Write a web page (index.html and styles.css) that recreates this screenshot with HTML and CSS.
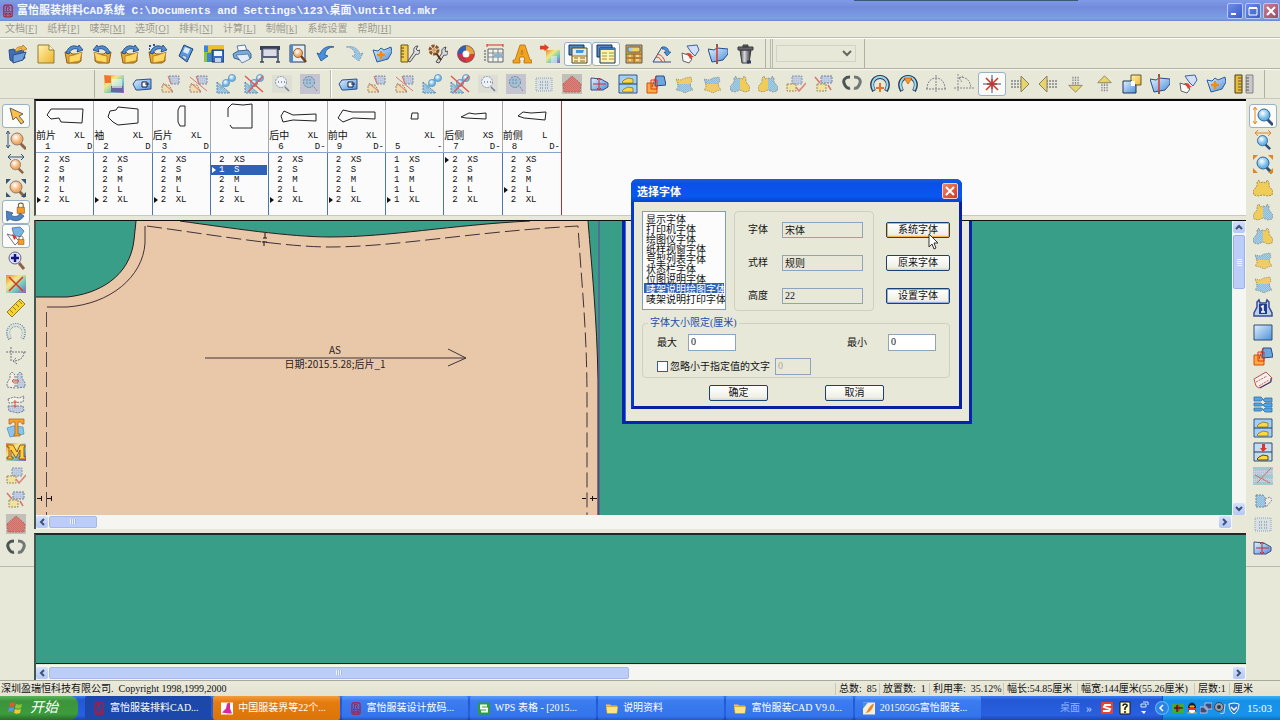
FILE: index.html
```html
<!DOCTYPE html>
<html lang="zh-CN">
<head>
<meta charset="utf-8">
<title>富怡服装排料CAD系统</title>
<link rel="stylesheet" href="styles.css">
</head>
<body>
<svg class="defs" aria-hidden="true">
  <defs>
    <linearGradient id="gb" x1="0" y1="0" x2="1" y2="1"><stop offset="0" stop-color="#e4f1fd"/><stop offset="1" stop-color="#4a90d8"/></linearGradient>
    <linearGradient id="gy" x1="0" y1="0" x2="1" y2="1"><stop offset="0" stop-color="#fff3b0"/><stop offset="1" stop-color="#eeb42c"/></linearGradient>
    <linearGradient id="gs" x1="0" y1="0" x2="1" y2="0"><stop offset="0" stop-color="#3c3c40"/><stop offset=".4" stop-color="#d8d8dc"/><stop offset="1" stop-color="#2c2c30"/></linearGradient>
    <linearGradient id="gr" x1="0" y1="0" x2="1" y2="1"><stop offset="0" stop-color="#f0803c"/><stop offset=".35" stop-color="#f4e884"/><stop offset=".65" stop-color="#70c8c0"/><stop offset="1" stop-color="#8a60c0"/></linearGradient>
    <radialGradient id="lo" cx=".4" cy=".35"><stop offset="0" stop-color="#fff"/><stop offset="1" stop-color="#f0a860"/></radialGradient>
    <radialGradient id="lb" cx=".4" cy=".35"><stop offset="0" stop-color="#fff"/><stop offset="1" stop-color="#64b4e8"/></radialGradient>
    <pattern id="hr" width="2" height="2" patternUnits="userSpaceOnUse"><path fill="#e08078" d="M0 0h2v2H0z"/><path fill="#cc706a" d="M0 0h1v1H0zM1 1h1v1H1z"/></pattern>
    <pattern id="hb" width="2" height="2" patternUnits="userSpaceOnUse"><path fill="#a4cde6" d="M0 0h2v2H0z"/><path fill="#90bcdc" d="M0 0h1v1H0zM1 1h1v1H1z"/></pattern>
    <pattern id="hl" width="2" height="2" patternUnits="userSpaceOnUse"><path fill="#c2cee2" d="M0 0h2v2H0z"/><path fill="#b0bed6" d="M0 0h1v1H0z"/></pattern>
  </defs>
  <symbol id="import" viewBox="0 0 20 20"><path d="M1 6l5-1 1 3 8-2 2 8-12 4-3-2z" fill="#3f6fb4" stroke="#2c4c84"/><path d="M5 11l13-3-3 8-10 3z" fill="#6fa0dc" stroke="#2c4c84"/><path d="M7 6c2-3 5-4 7-3l1-2 4 4-5 2v-2c-2-1-3 0-5 3z" fill="#f4b83c" stroke="#a06818" stroke-width=".7"/></symbol>
  <symbol id="new" viewBox="0 0 20 20"><path d="M2 1h11l5 5v13H2z" fill="url(#gy)" stroke="#8c7c34"/><path d="M13 1v5h5" fill="#fff8d0" stroke="#8c7c34"/></symbol>
  <symbol id="folder" viewBox="0 0 20 20"><path d="M1 8h5l2 2h9v7l-3 2H3z" fill="#e8ac34" stroke="#8c5c14"/><path d="M5 12l5-1 8-3-2 9-11 2z" fill="#ffd860" stroke="#a86c1c" stroke-width=".7"/></symbol>
  <symbol id="open" viewBox="0 0 20 20"><use href="#folder"/><path d="M2 9C4 3 9 0 14 3l1-2 4 5-6 2 1-3C9 4 6 6 5 10z" fill="#4f8fd4" stroke="#1c3c78" stroke-width=".8"/></symbol>
  <symbol id="openback" viewBox="0 0 20 20"><g transform="matrix(-1 0 0 1 20 0)"><use href="#open"/></g></symbol>
  <symbol id="openmany" viewBox="0 0 20 20"><use href="#open"/><path d="M1 2h2M5 1h2M1 5h1" stroke="#2454a0" stroke-width="2"/></symbol>
  <symbol id="disk" viewBox="0 0 20 20"><path d="M8 1l9 4-6 13-8-6z" fill="#5c98dc" stroke="#1c4484"/><path d="M9 3l5 2-2 5-5-2z" fill="#dcecfc"/><path d="M7 11l4 2-1 3-4-3z" fill="#d0dcec" stroke="#1c4484" stroke-width=".5"/></symbol>
  <symbol id="saveas" viewBox="0 0 20 20"><path d="M0 1h20v17H0z" fill="#8cc43c"/><path d="M4 1h16v7H4z" fill="#f4bc2c"/><path d="M0 2h4v6H0zM3 9h4v9H3z" fill="#3c84e0"/><path d="M8 6h12v12H8z" fill="#3c6cc0" stroke="#143468"/><path d="M10 7h8v5h-8z" fill="#eef6fc"/><path d="M11 14h6v4h-6z" fill="#c4d4e4"/></symbol>
  <symbol id="printer" viewBox="0 0 20 20"><path d="M5 2l8-1 2 6-8 2z" fill="#f4f8fc" stroke="#5c7ca4"/><path d="M1 10l5-3 10-1 3 4v4l-8 3-9-3z" fill="#7cacdc" stroke="#3c6090"/><path d="M4 11l12-1 2 5-8 4z" fill="#e4eef8" stroke="#3c6090" stroke-width=".7"/></symbol>
  <symbol id="plotter" viewBox="0 0 20 20"><path d="M0 2h20v4H0z" fill="#34405c"/><path d="M3 5h14v8H3z" fill="#dcdce4" stroke="#6c7488"/><path d="M2 5v13M18 5v13M0 18h4m12 0h4M3 13h14" stroke="#3c4864" stroke-width="1.500" fill="none"/></symbol>
  <symbol id="preview" viewBox="0 0 20 20"><path d="M2 1h15v17H2z" fill="#e4eef8" stroke="#24385c"/><path d="M2 1h3v17H2z" fill="#5488c0"/><circle cx="10" cy="9" r="4.500" fill="url(#lo)" stroke="#9c6434"/><path d="M13 12l5 6" stroke="#744018" stroke-width="2.500"/></symbol>
  <symbol id="undo" viewBox="0 0 20 20"><path d="M1 9l3 1c2-6 8-9 14-7-5 0-9 3-9 8l3 1-7 5z" fill="#4890dc" stroke="#204c90" stroke-width=".8"/></symbol>
  <symbol id="redo" viewBox="0 0 20 20"><g transform="matrix(-1 0 0 1 20 0)"><path d="M1 9l3 1c2-6 8-9 14-7-5 0-9 3-9 8l3 1-7 5z" fill="url(#hb)" stroke="#7496b0" stroke-width=".8" stroke-dasharray="2 1"/></g></symbol>
  <symbol id="pieceplus" viewBox="0 0 20 20"><path d="M1 6l5 1 3-3 3 2 7-3 1 5-4 7-11 3z" fill="url(#gb)" stroke="#2c5c9c"/><path d="M9 7v8M5 11h8" stroke="#f08c14" stroke-width="2.500"/></symbol>
  <symbol id="rulerwrench" viewBox="0 0 20 20"><path d="M1 1h7v17H1z" fill="#f0cc50" stroke="#6c5410"/><path d="M1 4h3M1 7h3M1 10h3M1 13h3" stroke="#5c440c"/><path d="M8 17l6-9c-1-4 1-6 4-6l-2 3 2 2 2-1c0 4-2 5-4 4l-6 8z" fill="#e0e0e4" stroke="#4c4c54"/></symbol>
  <symbol id="gearwrench" viewBox="0 0 20 20"><path d="M8 18l6-9c-1-4 1-5 4-6l-1 3 1 2 2-1c0 4-2 5-4 4l-5 8z" fill="#d8d8dc" stroke="#4c4c54"/><circle cx="6" cy="6" r="4" fill="none" stroke="#8c5428" stroke-width="3" stroke-dasharray="3 1"/><circle cx="6" cy="6" r="2" fill="#d8a060"/><path d="M8 9l5 7" stroke="#583414" stroke-width="2"/></symbol>
  <symbol id="wheel" viewBox="0 0 20 20"><g fill="none" stroke-width="5"><path d="M10 4a6 6 0 0 1 6 6" stroke="#e8a43c"/><path d="M16 10a6 6 0 0 1-6 6" stroke="#e03c30"/><path d="M10 16a6 6 0 0 1-6-6" stroke="#c43448"/><path d="M4 10a6 6 0 0 1 6-6" stroke="#3460b4"/></g><circle cx="10" cy="10" r="8.500" fill="none" stroke="#443454" stroke-width=".6"/><circle cx="10" cy="10" r="3" fill="#fff"/></symbol>
  <symbol id="chart" viewBox="0 0 20 20"><path d="M3 1h16M3 0v3M19 0v3" stroke="#d03020"/><path d="M4 5h15v13H4z" fill="#f4f4e8" stroke="#5c646c"/><path d="M9 5v13M14 5v13M4 9h15M4 13h15" stroke="#7c848c"/><path d="M10 10h8v3h-8z" fill="#84b4d8"/><path d="M1 6v11" stroke="#444c54" stroke-dasharray="2 1"/></symbol>
  <symbol id="glyphA" viewBox="0 0 20 20"><path d="M8 1h5l5 15h2v3h-8v-3h1l-1-3H8l-1 3h1v3H1v-3h2zM10 6l-1 4h2z" fill="#f4a41c" stroke="#a8640c" stroke-width=".7" fill-rule="evenodd"/></symbol>
  <symbol id="palin" viewBox="0 0 20 20"><path d="M6 6h14v13H6z" fill="url(#gr)"/><path d="M11 12h6v7h-6z" fill="#e8f0f8" opacity=".6"/><path d="M0 2h5V0l5 4-5 4V6H0z" fill="#e43c24" transform="scale(.9)"/></symbol>
  <symbol id="win1" viewBox="0 0 20 20"><path d="M1 1h15v10H1z" fill="#4c88c8" stroke="#14305c"/><path d="M4 4h15v15H4z" fill="#fff0b8" stroke="#4c4428"/><path d="M5 5h13v6H5z" fill="#d8ecfc"/><path d="M8 9V6h8l-1 3z" fill="#4c94d4"/><path d="M4 12h15M6 14h4M12 14h5M6 17h4M12 17h5" stroke="#8c6420"/></symbol>
  <symbol id="win2" viewBox="0 0 20 20"><path d="M1 1h15v12H1z" fill="#4c88c8" stroke="#14305c"/><path d="M4 4h15v15H4z" fill="#fff4b8" stroke="#14305c"/><path d="M4 5h15" stroke="#3c74b8" stroke-width="2"/><path d="M6 9h5M13 9h5M6 12h5M13 12h5M6 15h5M13 15h5" stroke="#b48c2c"/></symbol>
  <symbol id="cabinet" viewBox="0 0 20 20"><path d="M2 1h16v18H2z" fill="#dca444" stroke="#5c5c64"/><path d="M4 3h12v5H4z" fill="#a4d0f0" stroke="#2c4c74" stroke-width=".7"/><path d="M7 7l2-3h6v3z" fill="#f4d45c"/><path d="M2 10h16M2 14h16M10 10v9" stroke="#8c6424"/><path d="M5 12h2M12 12h3M5 16h2M12 16h3" stroke="#fff"/></symbol>
  <symbol id="angle" viewBox="0 0 20 20"><path d="M19 18H1L10 3" fill="none" stroke="#2c4c84"/><path d="M5 10c5 1 7 4 8 8M4 13c3 0 5 2 6 5" stroke="#dc4434" fill="none"/><path d="M10 3c4-1 7 2 7 5h2l-4 4-3-4h2c0-2-2-3-4-3z" fill="#4890d4" stroke="#1c4480" stroke-width=".6"/></symbol>
  <symbol id="flip" viewBox="0 0 20 20"><path d="M7 2l10-1 2 5-4 6-4-4z" fill="#d0e0f8" stroke="#44609c"/><path d="M2 9l6 2 4 4-3 4-6-2z" fill="#f8f8f4" stroke="#64646c"/><path d="M6 9c4 0 5 0 6 3h2l-4 3-2-4" fill="#dc4434"/></symbol>
  <symbol id="axis" viewBox="0 0 20 20"><path d="M0 5l6 1 3-2 11 1v5l-5 6-11 2z" fill="url(#gb)" stroke="#244c90"/><path d="M9 1v18" stroke="#e03424" stroke-width="1.500"/><path d="M9 0v3M9 17v3" stroke="#84643c" stroke-width="2"/></symbol>
  <symbol id="trash" viewBox="0 0 20 20"><path d="M4 6h11l-2 13H6z" fill="url(#gs)" stroke="#3c3c40"/><path d="M2 3h15v3H2zM7 1h5v2H7z" fill="#64646c" stroke="#3c3c40"/><path d="M11 18h4" stroke="#2c3c60" stroke-width="3"/></symbol>
  <symbol id="tiles" viewBox="0 0 20 20"><path d="M0 1h20v18H0z" fill="url(#gr)"/><path d="M1 2h6v7H1z" fill="#f0742c"/><path d="M7 12h12v6H7z" fill="#6c649c"/><path d="M8 5h10v9H8z" fill="#f4fcf4" opacity=".6"/></symbol>
  <symbol id="tag" viewBox="0 0 20 20"><path d="M1 10l3-4 15-1v10l-12 1H4z" fill="url(#gb)" stroke="#2c4c8c"/><path d="M10 8h5v5h-5z" fill="#fff" stroke="#141c40"/><path d="M13 10h4" stroke="#141c40"/></symbol>
  <symbol id="clip1" viewBox="0 0 20 20"><path d="M9 2h10v8h-8z" fill="url(#hl)" stroke="#84849c" stroke-dasharray="2 1"/><path d="M2 11h7l4 7H2z" fill="#f0dcac" stroke="#9c8474" stroke-dasharray="2 1"/><path d="M8 2l3 8M3 9l10 9" stroke="#d87468"/></symbol>
  <symbol id="clip2" viewBox="0 0 20 20"><use href="#clip1"/><path d="M2 3l17 14" stroke="#d8786c"/></symbol>
  <symbol id="tri" viewBox="0 0 20 20"><path d="M1 8l13 11H1z" fill="url(#hb)" stroke="#5c88a8" stroke-dasharray="2 1"/><path d="M9 9l6-5M5 14l4-4" stroke="#84b0cc" stroke-width="3"/><circle cx="16" cy="4" r="3.500" fill="url(#lb)" stroke="#6c9cc0"/><circle cx="10" cy="9" r="3.500" fill="url(#lb)" stroke="#6c9cc0"/></symbol>
  <symbol id="trix" viewBox="0 0 20 20"><use href="#tri"/><path d="M1 2l18 16M19 2L4 18" stroke="#dc5c54" stroke-width="1.500"/></symbol>
  <symbol id="mag1" viewBox="0 0 20 20"><path d="M0 1h20v18H0z" fill="#deded4"/><circle cx="9" cy="8" r="5.500" fill="#eef2f6" stroke="#8494ac" stroke-dasharray="2 1"/><path d="M6 8h1m2 0h1m2 0h1M13 13l4 4" stroke="#708098" stroke-width="1.500"/></symbol>
  <symbol id="mag2" viewBox="0 0 20 20"><path d="M0 0h20v20H0z" fill="#c4c4d0"/><circle cx="9" cy="8" r="5.500" fill="#a4c0d4" stroke="#6484a0" stroke-dasharray="2 1"/><path d="M6 6h6M6 9h6M14 13l3 4" stroke="#6c8ca8" stroke-dasharray="2 1"/></symbol>
  <symbol id="dots" viewBox="0 0 20 20"><path d="M2 4h16v13H2z" fill="#d8e0e4" stroke="#8ca4b4" stroke-dasharray="1 1"/><path d="M6 8h3m2 0h3M6 11h3m2 0h3M6 14h3m2 0h3" stroke="#6c8090" stroke-dasharray="1 1"/></symbol>
  <symbol id="house" viewBox="0 0 20 20"><path d="M0 0h20v20H0z" fill="#c0c0b8"/><path d="M1 10l9-8 9 8-1 8H2z" fill="url(#hr)" stroke="#b46460" stroke-dasharray="2 1"/></symbol>
  <symbol id="cross" viewBox="0 0 20 20"><path d="M1 4l10 1 7 4v4l-5 3H1z" fill="url(#gb)" stroke="#3c4c88"/><path d="M9 4v12M3 10h13M7 6l2-2 2 2M7 14l2 2 2-2" stroke="#cc2c34" fill="none"/></symbol>
  <symbol id="yshelf" viewBox="0 0 20 20"><path d="M1 1h18v18H1z" fill="#a4d0f4" stroke="#2c5888"/><path d="M4 8l2-2 4-2 5 1v4H5zM4 17l2-2 4-2 5 1v4H5z" fill="#fcd844" stroke="#7c6420" stroke-width=".7"/><path d="M1 10h18" stroke="#1c3c68"/></symbol>
  <symbol id="redblue" viewBox="0 0 20 20"><path d="M1 9h10v10H1z" fill="#fcac3c" stroke="#d04c14"/><path d="M10 2h8l2 9-11 1z" fill="#6ca8e0" stroke="#2c4c84"/><path d="M5 6h6v9H5zM10 2L6 13" stroke="#dc3420" fill="none"/></symbol>
  <symbol id="cowA" viewBox="0 0 20 20"><path d="M2 5l5 1 4-2 6-1 1 4-2 3H3z" fill="#f0cc68"/><path d="M3 10h14v3l2 3-4 1-4 2-4-2-5-1 2-3z" fill="url(#hb)"/><path d="M2 5l5 1 4-2 6-1 1 4-2 3 1 3 2 3-4 1-4 2-4-2-5-1 2-3V9z" fill="none" stroke="#80755a" stroke-width=".7" stroke-dasharray="1 1"/></symbol>
  <symbol id="cowB" viewBox="0 0 20 20"><path d="M2 5l5 1 4-2 6-1 1 4-2 3H3z" fill="url(#hb)"/><path d="M3 10h14v3l2 3-4 1-4 2-4-2-5-1 2-3z" fill="#f0cc68"/><path d="M2 5l5 1 4-2 6-1 1 4-2 3 1 3 2 3-4 1-4 2-4-2-5-1 2-3V9z" fill="none" stroke="#80755a" stroke-width=".7" stroke-dasharray="1 1"/></symbol>
  <symbol id="cowC" viewBox="0 0 20 20"><path d="M10 4L7 5 6 2 4 4v4l-4 5 1 4 4 1 5-2z" fill="url(#hb)"/><path d="M10 4l3 1 1-3 2 2v4l4 5-1 4-4 1-5-2z" fill="#f0cc58"/><path d="M10 4L7 5 6 2 4 4v4l-4 5 1 4 4 1 5-2 5 2 4-1 1-4-4-5V4l-2-2-1 3z" fill="none" stroke="#84806c" stroke-width=".7" stroke-dasharray="2 1"/></symbol>
  <symbol id="cowD" viewBox="0 0 20 20"><g transform="matrix(-1 0 0 1 20 0)"><use href="#cowC"/></g></symbol>
  <symbol id="cowY" viewBox="0 0 20 20"><path d="M10 4L7 5 6 2 4 4v4l-4 5 1 4 4 1 5-1 5 1 4-1 1-4-4-5V4l-2-2-1 3z" fill="#f0cc58" stroke="#a07c34" stroke-width=".8" stroke-dasharray="2 1"/></symbol>
  <symbol id="ycheck" viewBox="0 0 20 20"><path d="M6 2h10v8H6z" fill="url(#hl)" stroke="#8894b0" stroke-dasharray="2 1"/><path d="M1 10h9v7H1z" fill="#f0e2a0" stroke="#98885c" stroke-dasharray="2 1"/><path d="M10 13l3 4 7-8" fill="none" stroke="#dc8478" stroke-width="1.500"/></symbol>
  <symbol id="yx" viewBox="0 0 20 20"><path d="M7 2h11v7H7z" fill="url(#hl)" stroke="#7080a4" stroke-dasharray="2 1"/><path d="M3 10h9v7H3z" fill="#f0e2a0" stroke="#98885c" stroke-dasharray="2 1"/><path d="M1 3l5 6M14 11l3 5" stroke="#dc7468" stroke-width="1.500"/></symbol>
  <symbol id="ring" viewBox="0 0 20 20"><path d="M8 3C3 3 1 6 2 9s3 6 6 5" fill="none" stroke="#4c5454" stroke-width="3"/><path d="M12 3c5 0 7 3 6 6s-3 6-6 5" fill="none" stroke="#707878" stroke-width="3"/></symbol>
  <symbol id="arc1" viewBox="0 0 20 20"><path d="M4 17C-1 8 5 3 10 3s11 5 6 14" fill="none" stroke="#2c3c54" stroke-width="4"/><path d="M4 16C0 8 5 3 10 3s10 5 6 13" fill="none" stroke="#9cdcf0" stroke-width="2"/><path d="M10 9v9M6 14h8" stroke="#e87428" stroke-width="2"/></symbol>
  <symbol id="arc2" viewBox="0 0 20 20"><path d="M4 17C-1 8 5 3 10 3s11 5 6 14" fill="none" stroke="#2c3c54" stroke-width="4"/><path d="M4 16C0 8 5 3 10 3s10 5 6 13" fill="none" stroke="#9cdcf0" stroke-width="2"/><path d="M6 4h8l-4 6z" fill="#f49c24" stroke="#a84c14" stroke-width=".6"/></symbol>
  <symbol id="arcd1" viewBox="0 0 20 20"><path d="M1 15C1 8 5 4 10 4s9 4 9 11M10 1v18M0 15h20" fill="none" stroke="#80808c" stroke-dasharray="2 1"/></symbol>
  <symbol id="arcd2" viewBox="0 0 20 20"><path d="M4 0v18M0 14h20M5 4c7-2 11 2 12 10M5 4l4-2M5 4l3 4" fill="none" stroke="#888894" stroke-dasharray="2 1"/></symbol>
  <symbol id="arcd3" viewBox="0 0 20 20"><path d="M5 1v15M0 6h20M18 6c0 6-5 9-11 9l3-3M7 15l4 3" fill="none" stroke="#707084" stroke-dasharray="2 1"/></symbol>
  <symbol id="arcdash" viewBox="0 0 20 20"><path d="M4 17C-1 8 5 3 10 3s11 5 6 14" fill="none" stroke="#708490" stroke-width="4" stroke-dasharray="1 1"/><path d="M4 16C0 8 5 3 10 3s10 5 6 13" fill="none" stroke="#d4e4e4" stroke-width="2"/></symbol>
  <symbol id="star" viewBox="0 0 20 20"><path d="M10 1v18M1 10h18" stroke="#3c4c70"/><path d="M4 4l12 12M16 4L4 16" stroke="#d83024" stroke-width="1.500"/><path d="M10 5v10M5 10h10" stroke="#a43c40" stroke-width="1.500"/></symbol>
  <symbol id="aR" viewBox="0 0 20 20"><path d="M1 7h10M1 13h10M1 10h10" stroke="#80848c" stroke-width="1.500" stroke-dasharray="2 1"/><path d="M11 2l8 8-8 8z" fill="#e8d46c" stroke="#848060"/></symbol>
  <symbol id="aL" viewBox="0 0 20 20"><g transform="rotate(180 10 10)"><use href="#aR"/></g></symbol>
  <symbol id="aD" viewBox="0 0 20 20"><g transform="rotate(90 10 10) translate(2 2) scale(.85)"><use href="#aR"/></g></symbol>
  <symbol id="aU" viewBox="0 0 20 20"><g transform="rotate(270 10 10) translate(2 2) scale(.85)"><use href="#aR"/></g></symbol>
  <symbol id="blend" viewBox="0 0 20 20"><path d="M9 1h10v10H9z" fill="url(#gy)" stroke="#605830"/><path d="M1 7h9v4h4v8H1z" fill="url(#gb)" stroke="#1c345c"/><path d="M9 7h4v5H9z" fill="#fff"/></symbol>
  <symbol id="rulers" viewBox="0 0 20 20"><path d="M1 1h7v18H1z" fill="#e8bc3c" stroke="#4c3c10"/><path d="M12 1h7v18h-7z" fill="#c8c8cc" stroke="#84848c"/><path d="M4 4h4M4 7h4M4 10h4M4 13h4M4 16h4M12 4h3M12 7h3M12 10h3M12 13h3M12 16h3" stroke="#645834"/></symbol>
  <symbol id="cursor" viewBox="0 0 20 20"><path d="M4 2l3 12 3-3 5 7 3-2-5-6 4-2z" fill="#fcc048" stroke="#64605c"/></symbol>
  <symbol id="lensO" viewBox="0 0 20 20"><path d="M13 13l6 6" stroke="#8c6444" stroke-width="3"/><circle cx="10" cy="9" r="6" fill="url(#lo)" stroke="#947868"/></symbol>
  <symbol id="lensB" viewBox="0 0 20 20"><path d="M13 13l6 6" stroke="#30507c" stroke-width="3"/><circle cx="10" cy="9" r="6" fill="url(#lb)" stroke="#346494"/></symbol>
  <symbol id="vO" viewBox="0 0 20 20"><use href="#lensO" transform="translate(1 0)"/><path d="M2 2v15M0 4l2-3 2 3M0 15l2 3 2-3" fill="none" stroke="#34507c"/></symbol>
  <symbol id="hO" viewBox="0 0 20 20"><use href="#lensO" transform="translate(1 3) scale(.85)"/><path d="M2 3h15M5 0L2 3l3 3M15 0l3 3-3 3" fill="none" stroke="#34507c"/></symbol>
  <symbol id="aO" viewBox="0 0 20 20"><use href="#lensO"/><path d="M0 1h5L0 6zM20 1h-5l5 5zM0 19h5l-5-5zM20 19h-5l5-5z" fill="#34547c"/></symbol>
  <symbol id="vB" viewBox="0 0 20 20"><use href="#lensB" transform="translate(1 0)"/><path d="M2 2v15M0 4l2-3 2 3M0 15l2 3 2-3" fill="none" stroke="#e48424"/></symbol>
  <symbol id="hB" viewBox="0 0 20 20"><use href="#lensB" transform="translate(1 3) scale(.85)"/><path d="M2 3h15M5 0L2 3l3 3M15 0l3 3-3 3" fill="none" stroke="#e48424"/></symbol>
  <symbol id="aB" viewBox="0 0 20 20"><use href="#lensB"/><path d="M0 1h5L0 6zM20 1h-5l5 5zM0 19h5l-5-5zM20 19h-5l5-5z" fill="#e48424"/></symbol>
  <symbol id="lock" viewBox="0 0 20 20"><path d="M4 9V4c0-4 8-4 8 0v5" fill="none" stroke="#74643c" stroke-width="1.800"/><path d="M2 8h12v10H2z" fill="#f09c2c" stroke="#8c4c10"/></symbol>
  <symbol id="lockarrow" viewBox="0 0 20 20"><path d="M0 9l7 2-2 2c4 3 8 1 9-2l4 3c-3 5-9 6-14 3l-3 2z" fill="#4c84c4" stroke="#2c4c84" stroke-width=".7"/><use href="#lock" x="10" y="0" width="12" height="13"/></symbol>
  <symbol id="lockpiece" viewBox="0 0 20 20"><path d="M6 2l8-1 4 4-4 6-6-2z" fill="#78b4e4" stroke="#6480b4"/><path d="M1 8l7 2 5 5-4 4z" fill="#fff" stroke="#74748c"/><path d="M6 8l5 3-3 3z" fill="#dc3428"/><use href="#lock" x="11" y="9" width="10" height="11"/></symbol>
  <symbol id="zoomplus" viewBox="0 0 20 20"><path d="M13 13l5 6" stroke="#8c6444" stroke-width="3"/><circle cx="9" cy="8" r="6" fill="#dce0fc" stroke="#64648c"/><path d="M9 4v8M5 8h8" stroke="#141480" stroke-width="2.500"/></symbol>
  <symbol id="palx" viewBox="0 0 20 20"><path d="M0 1h20v18H0z" fill="url(#gr)"/><path d="M3 3l14 14M17 3L3 17" stroke="#dc3424" stroke-width="1.500"/></symbol>
  <symbol id="yruler" viewBox="0 0 20 20"><path d="M1 14L14 1l5 5L6 19z" fill="#f8d42c" stroke="#8c7c2c"/><path d="M4 12l3 3M7 9l3 3M10 6l3 3M13 3l3 3" stroke="#8c7c2c"/></symbol>
  <symbol id="pair" viewBox="0 0 20 20"><path d="M9 5L6 2 4 4v4l-3 5v4l8 1z" fill="#f0eee0" stroke="#78788c" stroke-dasharray="2 1"/><path d="M11 5l3-3 2 2v4l3 5v4l-8 1z" fill="url(#hl)" stroke="#708094" stroke-dasharray="2 1"/><path d="M6 11h7M8 9l-2 2 2 2M11 9l2 2-2 2" stroke="#dc5c4c" fill="none"/></symbol>
  <symbol id="stack" viewBox="0 0 20 20"><path d="M2 5l6-2 5 1 5-2-1 6-14 1z" fill="#f4f2e4" stroke="#78788c" stroke-dasharray="2 1"/><path d="M2 12h15l1 5-6 2-9-2z" fill="url(#hl)" stroke="#7080a0" stroke-dasharray="2 1"/><path d="M9 6v8M7 8h4M7 12h4" stroke="#dc5c4c"/></symbol>
  <symbol id="glyphT" viewBox="0 0 20 20"><path d="M1 10l6-2 10 1 1 7-14 3z" fill="#88c4ec" stroke="#5494c4" stroke-width=".8"/><path d="M3 1h15v5h-2c0-2-2-2-4-2v12h2v2H8v-2h1V4C6 4 5 4 5 6H3z" fill="#f8a428" stroke="#a05c20" stroke-width=".7"/></symbol>
  <symbol id="glyphM" viewBox="0 0 20 20"><path d="M0 1h20v18H0z" fill="url(#gr)"/><path d="M1 3h6l4 7 3-7h5v2h-1v10h2v2h-7v-2h1V8l-4 8-5-8v7h2v2H1v-2h2V5H1z" fill="#ffd040" stroke="#90340c" stroke-width=".8"/></symbol>
  <symbol id="shirt" viewBox="0 0 20 20"><path d="M7 5L6 2 4 4v5l-3 6v3h18v-3l-3-6V4l-2-2-1 3z" fill="#bcd0ec" stroke="#384c94" stroke-width="1.500"/><path d="M6 6h8v10H6z" fill="#203c8c"/><path d="M8 9l2-1v6m-2 0h4" stroke="#fff" stroke-width="1.500" fill="none"/></symbol>
  <symbol id="bluebox" viewBox="0 0 20 20"><path d="M1 3h18v15H1z" fill="url(#gb)" stroke="#2c4c74"/></symbol>
  <symbol id="wallet" viewBox="0 0 20 20"><path d="M1 9L13 2l6 6-2 4-11 6-3-2z" fill="#f8f0e8" stroke="#b45458"/><path d="M3 12l11-6M6 16l10-6" stroke="#b46468" stroke-dasharray="2 1"/><path d="M7 18l11-6v-4" fill="none" stroke="#30307c"/></symbol>
  <symbol id="brows" viewBox="0 0 20 20"><path d="M1 3h7l2 2-2 2H1zM12 4h7v4h-7l-2-2zM1 9h7l2 2-2 1H1zM12 9h7v4h-7l-2-2zM1 14h7l2 1-2 2H1zM12 14h7v4h-7l-2-2z" fill="#54a4e0" stroke="#3470a4" stroke-width=".8"/></symbol>
  <symbol id="fdown" viewBox="0 0 20 20"><path d="M1 1h18v18H1z" fill="#c4dcf0" stroke="#2c4c78"/><path d="M1 10h18" stroke="#1c3c68"/><path d="M4 17l2-2 4-2 5 1v4H5z" fill="#fcd844" stroke="#5c4810"/><path d="M9 2h3v4h2l-4 4-3-4h2z" fill="#e43424"/></symbol>
  <symbol id="chk" viewBox="0 0 20 20"><path d="M0 1h20v18H0z" fill="#9ccccc"/><path d="M0 4h20v5H0zM0 12h20v4H0z" fill="url(#hl)"/><path d="M2 9l15 8M4 17L18 2" stroke="#d86c64"/></symbol>
  <symbol id="ghost" viewBox="0 0 20 20"><path d="M3 5h7l3 4-1 8H3z" fill="url(#hb)" stroke="#708494" stroke-dasharray="2 1"/><path d="M12 9l5-2 2 3-6 7z" fill="#ecebe0" stroke="#8c84a0" stroke-dasharray="2 1"/></symbol>
  <symbol id="app" viewBox="0 0 12 16"><rect x="1" y="1" width="10" height="14" rx="2" fill="none" stroke="#b01c3c" stroke-width="1.500"/><path d="M4 8V3h3l1 2-2 1 2 2M2 9h8M3 11h2v2H3zM7 11h2v2H7z" fill="none" stroke="#b01c3c" stroke-width="1.200"/></symbol>
  <symbol id="tfolder" viewBox="0 0 12 12"><path d="M0 2h4l1 1h6v3H0z" fill="#f4c848"/><path d="M0 4h12l-1 7H1z" fill="#ffe480" stroke="#c88c20" stroke-width=".6"/></symbol>
</svg>

<header class="titlebar">
  <svg class="appicon"><use href="#app"/></svg>
  <h1>富怡服装排料CAD系统 C:\Documents and Settings\123\桌面\Untitled.mkr</h1>
  <div class="edge"></div>
  <button class="wbtn" aria-label="最小化"><svg viewBox="0 0 14 14"><path d="M3 10h5" stroke="#fff" stroke-width="2"/></svg></button>
  <button class="wbtn" aria-label="最大化"><svg viewBox="0 0 14 14"><path d="M3 4h8v7H3z" fill="none" stroke="#fff"/><path d="M3 4h8" stroke="#fff" stroke-width="2"/></svg></button>
  <button class="wbtn close" aria-label="关闭"><svg viewBox="0 0 14 14"><path d="M3 3l8 8M11 3l-8 8" stroke="#fff" stroke-width="2"/></svg></button>
</header>

<nav class="menubar">
  <button>文档[<u>F</u>]</button><button>纸样[<u>P</u>]</button><button>唛架[<u>M</u>]</button><button>选项[<u>O</u>]</button><button>排料[<u>N</u>]</button><button>计算[<u>L</u>]</button><button>制帽[<u>k</u>]</button><button>系统设置</button><button>帮助[<u>H</u>]</button>
</nav>

<div class="row1">
  <div class="bar" data-tools="import new open openback open openmany disk saveas printer plotter preview undo redo pieceplus rulerwrench gearwrench wheel chart glyphA palin *win1 *win2 cabinet angle flip axis trash"></div>
  <div class="combo"><select disabled aria-label="方案"></select></div>
</div>
<div class="row2">
  <div class="bar" data-tools="tiles tag clip1 clip2 tri trix mag1 mag2 | tag clip1 clip2 tri trix mag1 mag2 dots house cross yshelf redblue cowA cowB cowC cowD ycheck yx ring arc1 arc2 arcd1 arcd2 *star aR aL aD aU blend axis flip pieceplus rulers"></div>
</div>

<main class="work">
  <aside class="side left"><div class="bar" data-tools="*cursor vO hO aO *lockarrow *lockpiece zoomplus palx yruler arcdash arcd3 pair stack glyphT glyphM ycheck yx house ring"></div></aside>

  <section class="center">
    <div class="pieces"><div class="cards"></div></div>
    <div class="pane top">
      <div class="canvas">
        <svg class="drawing" viewBox="36 221 1196 295" preserveAspectRatio="xMinYMin slice">
          <path d="M36 297H67C98 294 130 277 134 240L136 221H180C230 228 290 237 330 237C390 237 450 225 530 221H588C592 270 597 320 598 380V516H36z" fill="#e8c8a8"/>
          <path d="M36 297H67C98 294 130 277 134 240L136 221M180 221C230 228 290 237 330 237C390 237 450 225 530 221M588 221C592 270 597 320 598 380V516" fill="none" stroke="#2a1c20"/>
          <path d="M599 221V516" stroke="#6c3ca0"/>
          <path d="M47 307H67C110 304 143 277 145 243V226" fill="none" stroke="#403038"/>
          <path d="M147 226C220 236 285 247 330 247C395 247 470 232 578 226C582 290 587 330 587 400V516" fill="none" stroke="#403038" stroke-dasharray="15 5"/>
          <path d="M46.500 312V516" stroke="#504858" stroke-dasharray="15 5"/>
          <path d="M37 498.500h5M47 498.500h5M41.500 496v5M51.500 496v5M582 498.500h4M590 498.500h7M592.500 496v5M265 233v5M263 238h4M264 241v5M262 242h5" stroke="#181014"/>
          <path d="M205 358H466L448 349M466 358L448 366" fill="none" stroke="#403438"/>
          <text x="335" y="354" text-anchor="middle">AS</text>
          <text x="335" y="368" text-anchor="middle">日期:2015.5.28;后片_1</text>
        </svg>
        <div class="backdialog"></div>
      </div>
      <div class="vscroll"><button class="sb" aria-label="向上"><svg viewBox="0 0 12 12"><path d="M3 8l3-3 3 3"/></svg></button><div class="vthumb"></div><button class="sb" aria-label="向下"><svg viewBox="0 0 12 12"><path d="M3 4l3 3 3-3"/></svg></button></div>
      <div class="hscroll"><button class="sb" aria-label="向左"><svg viewBox="0 0 12 12"><path d="M8 3L5 6l3 3"/></svg></button><div class="hthumb short"></div><button class="sb" aria-label="向右"><svg viewBox="0 0 12 12"><path d="M4 3l3 3-3 3"/></svg></button></div>
    </div>
    <div class="pane bottom">
      <div class="canvas"></div>
      <div class="hscroll"><button class="sb" aria-label="向左"><svg viewBox="0 0 12 12"><path d="M8 3L5 6l3 3"/></svg></button><div class="hthumb long"></div><button class="sb" aria-label="向右"><svg viewBox="0 0 12 12"><path d="M4 3l3 3-3 3"/></svg></button></div>
    </div>
  </section>

  <aside class="side right"><div class="bar" data-tools="*vB hB aB cowY cowD cowC cowB cowA shirt bluebox redblue wallet brows yshelf fdown chk ghost dots cross"></div></aside>
</main>

<footer class="status">
  <span class="company">深圳盈瑞恒科技有限公司. &nbsp;Copyright 1998,1999,2000</span>
  <span class="c44">总数: &nbsp;85</span><span class="c50">放置数: &nbsp;1</span><span class="c73">利用率: &nbsp;35.12%</span><span class="c73">幅长:54.85厘米</span><span class="c117">幅宽:144厘米(55.26厘米)</span><span class="c35">层数:1</span><span class="c44">厘米</span>
</footer>

<div class="taskbar">
  <button class="start"><svg viewBox="0 0 16 16"><path d="M2 3c2-1 4-1 5 0L6 7C5 6 3 6 1 7z" fill="#e8542c"/><path d="M8 4c2 1 4 1 6 0l-1 4c-2 1-4 1-6 0z" fill="#8cc43c"/><path d="M1 8c2-1 3-1 5 0l-1 4C3 11 2 11 0 12z" fill="#5c94e8"/><path d="M7 9c2 1 4 1 6 0l-1 4c-2 1-4 1-6 0z" fill="#f8c82c"/></svg>开始</button>
  <div class="tasks">
    <button class="task active"><svg><use href="#app"/></svg>富怡服装排料CAD...</button>
    <button class="task alert"><svg viewBox="0 0 12 12"><path d="M0 0h12v12H0z" fill="#fff"/><path d="M6 1l3-1v6l2 5H7L1 10l4-4z" fill="#d8289c"/></svg>中国服装界等22个...</button>
    <button class="task"><svg><use href="#app"/></svg>富怡服装设计放码...</button>
    <button class="task"><svg viewBox="0 0 12 12"><path d="M0 0h12v12H0z" fill="#2c9c3c"/><path d="M9 3H3v3h6v3H3" fill="none" stroke="#fff" stroke-width="1.800"/></svg>WPS 表格 - [2015...</button>
    <button class="task"><svg><use href="#tfolder"/></svg>说明资料</button>
    <button class="task"><svg><use href="#tfolder"/></svg>富怡服装CAD V9.0...</button>
    <button class="task"><svg viewBox="0 0 12 12"><path d="M0 0h12v12H0z" fill="#f4f0d8"/><path d="M1 11c4 0 4-8 10-10-1 5-3 9-10 10z" fill="#e8842c"/><path d="M0 0h5L0 6z" fill="#4c8cdc"/></svg>20150505富怡服装...</button>
  </div>
  <div class="lang"><span>桌面</span><sup>»</sup>
    <svg viewBox="0 0 14 14"><rect x="1" y="1" width="12" height="12" rx="1" fill="#e8442c"/><path d="M11 4H5L4 6l6 2-1 2H3" fill="none" stroke="#fff" stroke-width="2"/></svg>
    <svg viewBox="0 0 14 14"><path d="M2 1h10v12H2z" fill="#fff8c8" stroke="#141414"/><path d="M5 5c0-3 5-2 4 0L7 7v2M7 10v2" fill="none" stroke="#141414" stroke-width="1.500"/></svg>
    <svg viewBox="0 0 14 14"><path d="M5 3h5v3H5zM7 1h5v3" fill="none" stroke="#dce8fc"/><path d="M5 10h5l-2 3z" fill="#fff"/></svg>
  </div>
  <div class="tray">
    <button class="chev" aria-label="展开"><svg viewBox="0 0 12 12"><path d="M7 3L4 6l3 3" fill="none" stroke="#fff" stroke-width="1.500"/></svg></button>
    <svg viewBox="0 0 12 12"><path d="M0 2h12v9H0z" fill="#3cac3c"/><path d="M2 6l4-4 3 4-3 4z" fill="#dc3424"/><path d="M5 3v7M2 6h9" stroke="#141414"/></svg>
    <svg viewBox="0 0 12 12"><ellipse cx="6" cy="6" rx="4" ry="5.500" fill="#241c1c"/><ellipse cx="6" cy="9" rx="3" ry="2.500" fill="#fff"/><path d="M2 6h8v2H2z" fill="#e03424"/><path d="M4 4h4v1H4zM1 11h4m2 0h4" fill="#f4ac24" stroke="#f4ac24"/></svg>
    <svg viewBox="0 0 12 12"><path d="M5 1h7v6H5zM0 5h7v6H0z" fill="#40487c" stroke="#b4c4dc"/></svg>
    <svg viewBox="0 0 12 12"><circle cx="5" cy="5" r="4.500" fill="#9ca0a8" stroke="#3c4454"/><circle cx="5" cy="5" r="2" fill="#30384c"/><path d="M11 2l-1 9-4 1" fill="none" stroke="#c8d0dc"/></svg>
    <svg viewBox="0 0 12 12"><path d="M1 2l5-1 5 1c0 5-2 8-5 10C3 10 1 7 1 2z" fill="#2c74c4" stroke="#fff"/><path d="M3 5l3 3 3-3" stroke="#fff" fill="none" stroke-width="1.500"/></svg>
    <time>15:03</time>
  </div>
</div>

<form class="dialog" role="dialog" aria-label="选择字体">
  <div class="dtitle"><h2>选择字体</h2><button type="button" class="dclose" aria-label="关闭"><svg viewBox="0 0 14 14"><path d="M3 3l8 8M11 3l-8 8" stroke="#fff" stroke-width="2"/></svg></button></div>
  <div class="dbody">
    <div class="drow">
      <select class="fontlist" size="10" aria-label="字体类别"><option>显示字体</option><option>打印机字体</option><option>绘图仪字体</option><option>纸样视窗字体</option><option>号型列表字体</option><option>状态栏字体</option><option>位图说明字体</option><option selected>唛架说明绘图字体</option><option>唛架说明打印字体</option></select>
      <div class="props">
        <label for="f1">字体</label><input id="f1" value="宋体" readonly>
        <label for="f2">式样</label><input id="f2" value="规则" readonly>
        <label for="f3">高度</label><input id="f3" value="22" readonly>
      </div>
      <div class="acts"><button type="button" class="btn hot">系统字体</button><button type="button" class="btn">原来字体</button><button type="button" class="btn def">设置字体</button></div>
    </div>
    <fieldset class="limits">
      <legend>字体大小限定(厘米)</legend>
      <div class="lrow"><label for="mx">最大</label><input id="mx" value="0"><label class="push" for="mn">最小</label><input id="mn" value="0"></div>
      <div class="lrow two"><input type="checkbox" id="ig"><label for="ig">忽略小于指定值的文字</label><input class="small" value="0" disabled aria-label="指定值"></div>
    </fieldset>
    <div class="dend"><button type="button" class="btn">确定</button><button type="button" class="btn">取消</button></div>
  </div>
</form>
<svg class="pointer" viewBox="0 0 12 18"><path d="M1 1v13l3-3 2 5 2-1-2-5h4z" fill="#fff" stroke="#333"/></svg>
<script src="app.js"></script>
</body>
</html>
```

FILE: styles.css
```css
* { box-sizing: border-box; }
body, h1, h2, fieldset { margin: 0; padding: 0; }
body {
  height: 100vh;
  display: flex;
  flex-direction: column;
  overflow: hidden;
  background: #e8e8d9;
  color: #111;
  font: 10px/12px "Liberation Serif", "Noto Sans CJK SC", serif;
}
button, input, select { font: inherit; color: inherit; padding: 0; margin: 0; border: 0; background: none; border-radius: 0; }
svg { display: block; flex: none; }
.defs { position: absolute; width: 0; height: 0; }

.titlebar {
  flex: none; height: 21px; display: flex; align-items: center; gap: 2px; padding: 0 1px 0 3px;
  background: linear-gradient(#7f9be6, #738bdc 35%, #7c9fe4 90%, #6c86cc);
}
.appicon { width: 10px; height: 14px; margin-right: 2px; }
.titlebar h1 { flex: 1; font: bold 11px/16px "Liberation Mono", "Noto Sans CJK SC", monospace; color: #f4f8ff; white-space: nowrap; }
.edge { align-self: flex-start; width: 224px; height: 1px; margin-right: 147px; background: #3c5a78; }
.wbtn { width: 16px; height: 16px; border: 1px solid #b8c8f4; border-radius: 2px; background: linear-gradient(135deg, #6c8cec, #3c5ccc); }
.wbtn svg { width: 14px; height: 14px; }
.wbtn.close { background: linear-gradient(135deg, #c48094, #9c4c64); }

.menubar { flex: none; height: 17px; display: flex; gap: 10px; align-items: center; padding-left: 5px; border-bottom: 1px solid #bcbcb0; color: #9a9a90; }

.row1, .row2 { flex: none; display: flex; }
.row1 { height: 31px; border-top: 1px solid #fff; border-bottom: 1px solid #b0b0a4; }
.row2 { height: 30px; padding-left: 94px; border-bottom: 1px solid #c8c8bc; border-top: 1px solid #f8f8f0; }
.bar { display: flex; align-items: center; }
.row1 .bar { width: 766px; padding-left: 4px; border-right: 1px solid #b0b0a4; }
.row2 .bar { width: 1171px; padding-left: 5px; border-left: 1px solid #b0b0a4; border-right: 1px solid #b0b0a4; }
.tool { width: 28px; height: 24px; flex: none; display: flex; align-items: center; justify-content: center; border: 1px solid transparent; border-radius: 3px; }
.tool svg { width: 20px; height: 20px; }
.tool.on { background: #fbfbf8; border-color: #98b0c8; }
.sep { width: 10px; height: 28px; margin: 0 -6px 0 6px; border-left: 1px solid #b8b8ac; box-shadow: inset 1px 0 #fff; }
.combo { display: flex; align-items: center; padding: 0 8px 0 3px; margin-left: 4px; border-left: 3px double #b8b8ac; border-right: 1px solid #b0b0a4; }
.combo select { width: 80px; height: 17px; border: 1px solid #c4c4b8; background: #e8e8d9; opacity: .6; }

.work { flex: 1; min-height: 0; display: flex; }
.side { flex: none; width: 34px; }
.side .bar { flex-direction: column; padding: 5px 0 6px; border-bottom: 1px solid #b8b8ac; }
.side.left .bar { padding-right: 2px; }
.center { flex: 1; min-width: 0; display: flex; flex-direction: column; gap: 4px; }

.pieces { flex: none; height: 117px; background: #fbfbfb; border-top: 2px solid #080808; border-left: 2px solid #505050; border-bottom: 1px solid #c8c8bc; }
.cards { width: 526px; height: 100%; display: grid; grid-template-columns: repeat(9, minmax(0, 1fr)); border-right: 1px solid #b03038; font: 9px/10px "Liberation Mono", "Noto Sans CJK SC", monospace; }
.card { display: flex; flex-direction: column; overflow: hidden; }
.thumb { height: 52px; display: flex; flex-direction: column; border-bottom: 1px solid #88a4c8; border-right: 1px solid #a8a8a8; }
.thumb svg { width: 58px; height: 30px; }
.thumb path { fill: none; stroke: #222; }
.thumb div { display: flex; height: 11px; line-height: 11px; white-space: nowrap; }
.thumb .nm { flex: 1; font-size: 10px; }
.thumb .sz { width: 19px; }
.thumb .no { flex: 1; padding-left: 9px; }
.thumb .dd { padding-right: 1px; }
.sizes { flex: 1; padding-top: 2px; border-right: 1px solid #4c78b0; }
.card:last-child > div { border-right: 0; }
.size { display: grid; grid-template-columns: 7px 15px 1fr; height: 10px; line-height: 10px; padding-left: 1px; white-space: nowrap; }
.size i { display: block; width: 0; height: 0; margin-top: 2px; border: 3px solid transparent; border-left: 4px solid #111; border-right: 0; }
.size.sel { background: #2d62b8; color: #fff; margin-right: 1px; }
.size.sel i { border-left-color: #fff; }

.pane { display: grid; min-height: 0; border-left: 2px solid #405850; }
.pane.top { flex: 310; grid-template: minmax(0, 1fr) 14px / minmax(0, 1fr) 14px; border-top: 1px solid #111; }
.pane.bottom { flex: 146; grid-template: minmax(0, 1fr) 15px / minmax(0, 1fr); border-top: 2px solid #182c28; }
.canvas { position: relative; overflow: hidden; background: #389e87; }
.bottom .canvas { border-bottom: 1px solid #10201c; margin-bottom: 1px; }
.drawing { width: 100%; height: 100%; }
.drawing text { font: 10px "Noto Sans CJK SC", sans-serif; fill: #2a2024; }
.backdialog { position: absolute; left: 586px; top: -20px; width: 350px; height: 223px; background: #e8e8d9; border: 3px solid #0a22b0; border-top: 0; box-shadow: inset 1px 0 #3c68e0; }
.hscroll, .vscroll { display: flex; align-items: center; background: #f5f5f2; }
.hscroll { padding-right: 1px; }
.vscroll { flex-direction: column; }
.hscroll .sb:last-child { margin-left: auto; }
.vscroll .sb:last-child { margin-top: auto; }
.sb { flex: none; width: 12px; height: 12px; border-radius: 2px; background: linear-gradient(#d4e0fc, #b4c8f4); }
.sb path { fill: none; stroke: #3c5078; stroke-width: 2; }
.vthumb { width: 12px; height: 54px; margin-top: 2px; border: 1px solid #9cb0e8; border-radius: 2px; background: #bccdfa repeating-linear-gradient(#eef4fe 0 1px, #bccdfa 1px 2px) center / 5px 7px no-repeat; }
.hthumb { height: 12px; margin-left: 1px; border: 1px solid #a4b8ec; border-radius: 2px; background: #bccdfa repeating-linear-gradient(90deg, #eef4fe 0 1px, #a4b8ec 1px 2px) center / 6px 5px no-repeat; }
.hthumb.short { width: 48px; }
.hthumb.long { width: 48%; }

.status { flex: none; height: 16px; display: flex; align-items: center; border-top: 1px solid #a8a898; background: linear-gradient(#eaeadc, #e4e2d0); white-space: nowrap; }
.status .company { flex: 1; padding-left: 1px; }
.status span + span { padding-left: 3px; border-left: 1px solid #c8c8b8; }
.c44 { width: 44px; } .c50 { width: 50px; } .c73 { width: 74px; } .c117 { width: 117px; } .c35 { width: 35px; }
.status .c44:last-child { width: 51px; }

.taskbar { flex: none; height: 24px; display: flex; align-items: stretch; color: #fff; background: linear-gradient(#3c7cf0, #2458d4 15%, #2860e0 80%, #1c44b0); }
.start { width: 78px; display: flex; align-items: center; gap: 6px; padding-left: 8px; font-size: 14px; font-style: italic; border-radius: 0 8px 8px 0; background: linear-gradient(#5cb45c, #3c943c 20%, #3c9c3c 75%, #286c28); }
.start svg { width: 16px; height: 16px; }
.tasks { display: flex; flex: 1; padding-left: 7px; gap: 2px; max-width: 903px; }
.task { flex: 1; min-width: 0; display: flex; align-items: center; gap: 5px; padding-left: 8px; white-space: nowrap; border-radius: 2px; background: linear-gradient(#5c9cfc, #3c7cf0 20%, #3474ec 85%, #2458c8); }
.task svg { width: 12px; height: 13px; }
.task.active { background: #1c48ac; }
.task.alert { background: linear-gradient(#f49c3c, #e47c10 25%, #dc7408); }
.lang { margin-left: auto; display: flex; align-items: center; gap: 4px; padding-right: 12px; color: #90b4f8; }
.lang span { margin-right: 2px; }
.lang sup { margin-right: 4px; color: #c4d8fc; font-size: 12px; }
.lang svg { width: 14px; height: 14px; }
.tray { width: 118px; display: flex; align-items: center; gap: 2px; background: linear-gradient(#3cb0f8, #1490e8 20%, #1894ec 80%, #0c70c0); border-left: 1px solid #0c50a8; }
.tray svg { width: 12px; height: 12px; }
.tray .chev { border-radius: 50%; background: #2c84e8; box-shadow: 0 0 0 1px #6cb8fc; margin: 0 2px 0 -7px; }
.tray time { margin-left: 5px; font-size: 11px; }

.dialog { position: absolute; left: 631px; top: 179px; width: 331px; background: #e8e8d9; border: 3px solid #0838c8; border-top: 0; border-bottom-color: #0820a0; border-right-color: #0820a0; border-radius: 6px 6px 0 0; }
.dtitle { height: 23px; margin: 0 -3px; padding: 0 4px 0 6px; display: flex; align-items: center; justify-content: space-between; border-radius: 6px 6px 0 0; background: linear-gradient(#1c5cd8, #0a50e8 20%, #0858f0 75%, #0644cc); color: #fff; }
.dtitle h2 { font: bold 11px/14px "Noto Sans CJK SC", sans-serif; }
.dclose { width: 16px; height: 16px; border: 1px solid #f0d0c8; border-radius: 2px; background: linear-gradient(135deg, #f0886c, #cc3c1c); }
.dclose svg { width: 14px; height: 14px; }
.dbody { padding: 9px 9px 5px 8px; }
.drow { display: flex; }
.fontlist { width: 84px; height: 99px; border: 1px solid #7c9cc0; background: #fcfcfc; overflow: hidden; padding: 1px; }
.fontlist option { display: flex; align-items: center; height: 10px; min-height: 0; padding: 0 2px; overflow: visible; }
.fontlist option:checked { background: #2f62b8 linear-gradient(#2f62b8, #2f62b8); -webkit-text-fill-color: #fff; }
.props { margin-left: 8px; width: 140px; height: 100px; display: grid; grid-template-columns: 34px 81px; row-gap: 17px; align-items: center; align-content: start; padding: 10px 0 0 13px; border: 1px solid #d0d0c0; border-radius: 4px; }
.props input, .lrow input { height: 17px; border: 1px solid #8ca4bc; padding: 0 2px 2px; }
.props input { width: 81px; height: 16px; }
.acts { margin-left: auto; display: grid; row-gap: 17px; align-content: start; padding-top: 11px; }
.btn { width: 64px; height: 16px; line-height: 12px; border: 1px solid #1c4070; border-radius: 2px; background: linear-gradient(#fff, #f0f0e8 80%, #d8d4c8); }
.btn.hot { box-shadow: inset 0 0 0 1px #f0b440; }
.btn.def { box-shadow: inset 0 0 0 1px #94b0e8; }
.limits { min-width: 0; margin-top: 6px; border: 1px solid #d0d0c0; border-radius: 4px; padding: 5px 13px 2px 14px; }
.limits legend { margin-left: -9px; padding: 0 2px; color: #1c4cac; }
.lrow { display: flex; align-items: center; height: 17px; }
.lrow input { background: #fff; }
.lrow label + input { width: 48px; margin-left: 11px; }
.lrow .push { margin-left: auto; }
.lrow label.push + input { margin-left: 21px; }
.lrow.two { margin-top: 7px; }
.lrow input[type="checkbox"] { appearance: none; width: 11px; height: 11px; border: 1px solid #3c5c84; margin-right: 2px; }
.lrow label + input.small { width: 36px; margin-left: 5px; background: #e8e8d9; color: #a8a898; }
.dend { display: flex; padding: 7px 66px 0 67px; justify-content: space-between; }
.dend .btn { width: 59px; }
.pointer { position: absolute; left: 928px; top: 233px; width: 12px; height: 18px; }
```

FILE: app.js
```js
const NS = 'http://www.w3.org/2000/svg';

function icon(id) {
  const svg = document.createElementNS(NS, 'svg');
  const use = document.createElementNS(NS, 'use');
  use.setAttribute('href', '#' + id);
  svg.append(use);
  return svg;
}

document.querySelectorAll('.bar').forEach(bar => {
  bar.dataset.tools.split(' ').forEach(name => {
    if (name === '|') {
      const sep = document.createElement('span');
      sep.className = 'sep';
      bar.append(sep);
      return;
    }
    const on = name[0] === '*';
    const id = on ? name.slice(1) : name;
    const button = document.createElement('button');
    button.className = on ? 'tool on' : 'tool';
    button.setAttribute('aria-label', id);
    button.append(icon(id));
    bar.append(button);
  });
});

const SIZES = ['XS', 'S', 'M', 'L', 'XL'];
const pieces = [
  { name: '前片', size: 'XL', no: '1', tail: 'D', n: 2, mark: 4, d: 'M11 14l4-6h32l-1 14-21-1-2-4-8 1z' },
  { name: '袖', size: 'XL', no: '2', tail: 'D', n: 2, mark: 4, d: 'M14 16l2-6 6-1 2-3 20 2v14l-20 2-5-3z' },
  { name: '后片', size: 'XL', no: '3', tail: 'D', n: 2, mark: 4, d: 'M25 9l2-4h5v20h-5l-2-4z' },
  { name: '', size: '', no: '', tail: '', n: 2, mark: 1, sel: true, d: 'M17 16V7l4-4 11 1 9-1v24H21l-2-3' },
  { name: '后中', size: 'XL', no: '6', tail: 'D-', n: 2, mark: 4, d: 'M12 15l3-5 9 4 23-1v7l-23-1-10 2z' },
  { name: '前中', size: 'XL', no: '9', tail: 'D-', n: 2, mark: 4, d: 'M10 17l5-8 9 2h23v7l-22-1-10 4z' },
  { name: '', size: 'XL', no: '5', tail: '-', n: 1, mark: 4, d: 'M26 12h6v6h-7z' },
  { name: '后侧', size: 'XS', no: '7', tail: 'D-', n: 2, mark: 0, d: 'M17 16l8-4 6 1 11-1v6l-20-1z' },
  { name: '前侧', size: 'L', no: '8', tail: 'D-', n: 2, mark: 3, d: 'M15 15l5-4 8 1 15-1-1 8-21-2z' }
];

document.querySelector('.cards').innerHTML = pieces.map(p => `
  <div class="card">
    <div class="thumb">
      <svg viewBox="0 0 58 30"><path d="${p.d}"/></svg>
      <div><span class="nm">${p.name}</span><span class="sz">${p.size}</span></div>
      <div><span class="no">${p.no}</span><span class="dd">${p.tail}</span></div>
    </div>
    <div class="sizes">${SIZES.map((s, i) => `
      <div class="size${p.sel && i === p.mark ? ' sel' : ''}"><span>${i === p.mark ? '<i></i>' : ''}</span><span>${p.sel && i === p.mark ? 1 : p.n}</span><span>${s}</span></div>`).join('')}
    </div>
  </div>`).join('');
```
